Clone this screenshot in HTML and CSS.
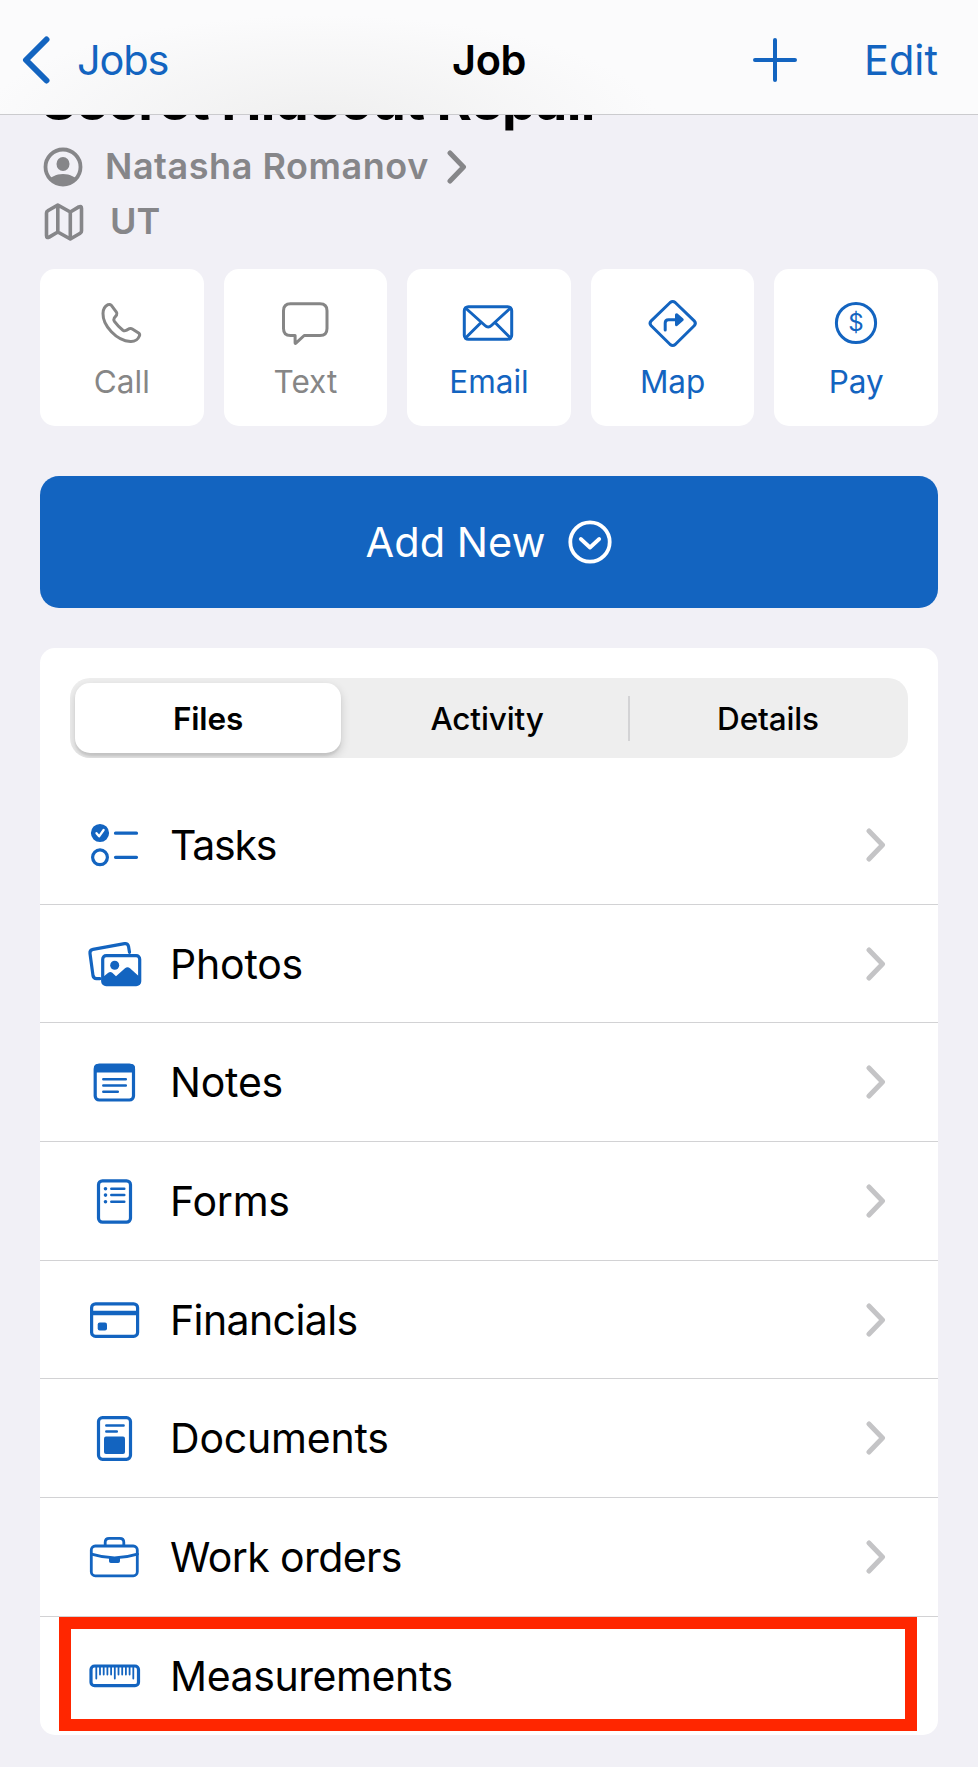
FILE: index.html
```html
<!DOCTYPE html>
<html lang="en">
  <head>
    <meta charset="utf-8">
    <meta name="viewport" content="width=device-width, initial-scale=1">
    <title>Job</title>
    <link rel="stylesheet" href="styles.css">
  </head>
  <body>
    <nav class="navbar">
      <a class="back">
        <svg width="28" height="48" viewBox="0 0 28 48"><path d="M24.500 3.500L4 24l20.500 20.500"/></svg>
        <span>Jobs</span>
      </a>
      <span class="nav-title">Job</span>
      <div class="nav-actions">
        <svg width="44" height="44" viewBox="0 0 44 44"><path d="M22 2v40M2 22h40"/></svg>
        <a class="edit">Edit</a>
      </div>
    </nav>

    <main>
      <header class="job">
        <h1>Secret Hideout Repair</h1>
        <div class="job-line">
          <svg class="job-icon" width="42" height="42" viewBox="0 0 42 42">
            <clipPath id="face"><circle cx="21" cy="21" r="18"/></clipPath>
            <circle cx="21" cy="21" r="17.500" fill="none" stroke="currentColor" stroke-width="3.800"/>
            <ellipse cx="21" cy="18" rx="6.500" ry="7"/>
            <path clip-path="url(#face)" d="M5 36c3-5 9-8 16-8s13 3 16 8v6H5z"/>
          </svg>
          <span class="customer">Natasha Romanov</span>
          <svg class="customer-arrow" width="20" height="34" viewBox="0 0 20 34"><path d="M3 3l13.500 14L3 31"/></svg>
        </div>
        <div class="job-line">
          <svg class="job-icon map-outline" width="42" height="42" viewBox="0 0 42 42">
            <path d="M4.500 12q0-1.500 1.300-2.200L15.800 4l12.500 7 8.500-5.100q2.700-1.300 2.700 1.600V30q0 1.500-1.300 2.200L28.300 38l-12.500-7-8.600 5.100q-2.700 1.300-2.700-1.600zM15.800 4v27M28.300 11v27"/>
          </svg>
          <span class="place">UT</span>
        </div>
      </header>

      <div class="actions">
        <button class="action disabled">
          <svg width="60" height="60" viewBox="0 0 60 60"><path d="M19.200 12.200l5.200 6.900q1 1.400.2 2.900l-2.400 3.200q-.9 1.500.2 3.200 3.600 5 8.500 8.800 1.600 1.100 3.300.1l3.200-1.600q1.500-.7 2.900.2l6.300 4.100q1.600 1.200.8 3c-1.500 3.600-4.600 5.700-9 5.500C24.500 47.800 10.700 32.500 11 20.500c0-4.200 1.800-7.200 5-8.800q2-.8 3.200.5z"/></svg>
          <span>Call</span>
        </button>
        <button class="action disabled">
          <svg width="60" height="60" viewBox="0 0 60 60"><path d="M15.500 10.700h29.500q7 0 7 7v17.800q0 7-7 7H29.200l-8.300 7.700q-.8.700-.8-.4v-7.300h-4.600q-7 0-7-7V17.700q0-7 7-7z"/></svg>
          <span>Text</span>
        </button>
        <button class="action">
          <svg width="60" height="60" viewBox="0 0 60 60"><rect x="5.300" y="13.700" width="47.400" height="32.600" rx="4"/><path d="M6.500 15l19.500 17.500q3.200 3.200 6.400 0L51.500 15M6.500 45l15.600-15.500M51.500 45L36 29.500"/></svg>
          <span>Email</span>
        </button>
        <button class="action">
          <svg width="60" height="60" viewBox="0 0 60 60"><path d="M27.200 9.500q2.500-2 5 0L51.200 27.800q2.300 2.500 0 5L32.200 51.500q-2.500 2-5 0L8.200 32.800q-2.300-2.500 0-5z"/><path d="M22.200 37v-7q0-3.300 3.300-3.300h8"/><path class="solid" d="M33.500 21.700l5.700 5-5.700 5z"/></svg>
          <span>Map</span>
        </button>
        <button class="action">
          <svg width="60" height="60" viewBox="0 0 60 60"><circle cx="30" cy="30" r="19.600"/><text x="30" y="38.200">$</text></svg>
          <span>Pay</span>
        </button>
      </div>

      <button class="add-new">
        <span>Add New</span>
        <svg width="44" height="44" viewBox="0 0 44 44"><circle cx="22" cy="22" r="19.700"/><path d="M12.800 19l9.200 8.500 9.200-8.500"/></svg>
      </button>

      <section class="panel">
        <div class="tabs">
          <button class="tab active">Files</button>
          <button class="tab activity">Activity</button>
          <button class="tab details">Details</button>
        </div>

        <ul class="list">
          <li>
            <svg class="icon" viewBox="0 0 56 56">
              <circle class="solid" cx="14" cy="16" r="7.500"/>
              <path class="check" d="M10.500 16.200l2.600 3.100 4.500-6.300"/>
              <circle cx="14" cy="40.300" r="7.400"/>
              <path d="M29.500 16.200h21M29.500 40.300h21"/>
            </svg>
            <span class="tasks">Tasks</span>
            <svg class="arrow" viewBox="0 0 20 34"><path d="M3 3l13.500 14L3 31"/></svg>
          </li>
          <li>
            <svg class="icon" viewBox="0 0 56 56">
              <path d="M14 42.600h-3.500q-3-.2-3.500-3L4 17.500q-.5-3.600 3-4.200l31.500-5.600q3.300-.4 4 2.600l1 6"/>
              <rect x="16.700" y="19.700" width="37" height="29" rx="3.500"/>
              <circle class="dot" cx="28.700" cy="29.200" r="4.500"/>
              <path class="fill" d="M17 41l5.300-4.200q2-1.500 4 0L30 40.200l9-8q2.500-1.800 5 0l9.700 8.800v7.500H17z"/>
            </svg>
            <span class="photos">Photos</span>
            <svg class="arrow" viewBox="0 0 20 34"><path d="M3 3l13.500 14L3 31"/></svg>
          </li>
          <li>
            <svg class="icon" viewBox="0 0 56 56">
              <rect x="9.200" y="11" width="38.300" height="35" rx="4"/>
              <path class="fill" d="M8 19.500V14q0-4 4-4h33q4 0 4 4v5.500q-1-1-3-1H11q-2 0-3 1z"/>
              <path class="thin" d="M17.300 25.200h22.500M17.300 31.400h22.500M17.300 37.800h14.500"/>
            </svg>
            <span class="notes">Notes</span>
            <svg class="arrow" viewBox="0 0 20 34"><path d="M3 3l13.500 14L3 31"/></svg>
          </li>
          <li>
            <svg class="icon" viewBox="0 0 56 56">
              <rect x="12.500" y="7.800" width="32" height="41.400" rx="4"/>
              <path class="thin" d="M25.300 15.700h13M25.300 22.100h13M25.300 28.700h13"/>
              <circle class="dot" cx="19.500" cy="15.700" r="1.800"/>
              <circle class="dot" cx="19.500" cy="22.100" r="1.800"/>
              <circle class="dot" cx="19.500" cy="28.700" r="1.800"/>
            </svg>
            <span class="forms">Forms</span>
            <svg class="arrow" viewBox="0 0 20 34"><path d="M3 3l13.500 14L3 31"/></svg>
          </li>
          <li>
            <svg class="icon" viewBox="0 0 56 56">
              <rect x="5.600" y="11.800" width="46" height="32.600" rx="4"/>
              <path class="fill" d="M5 18.700h47v4.500H5z"/>
              <rect class="fill" x="11.700" y="30.500" width="9.300" height="8" rx="2"/>
            </svg>
            <span class="financials">Financials</span>
            <svg class="arrow" viewBox="0 0 20 34"><path d="M3 3l13.500 14L3 31"/></svg>
          </li>
          <li>
            <svg class="icon" viewBox="0 0 56 56">
              <rect x="12.500" y="7.600" width="32" height="41.700" rx="4"/>
              <path class="thin" d="M20.300 15.600h17.300M20.300 21.600h10.500"/>
              <rect class="fill" x="18" y="26.500" width="21" height="17.500" rx="2"/>
            </svg>
            <span class="documents">Documents</span>
            <svg class="arrow" viewBox="0 0 20 34"><path d="M3 3l13.500 14L3 31"/></svg>
          </li>
          <li>
            <svg class="icon case" viewBox="0 0 56 56">
              <rect x="5.300" y="17" width="46" height="29.800" rx="4"/>
              <path d="M19.200 16.500v-3.200q0-4 4-4h10.600q4 0 4 4v3.200M5.500 25.200q23 7.200 46 0"/>
              <path class="fill" d="M23 28.500h11v3.700q0 1.800-1.800 1.800h-7.400q-1.800 0-1.800-1.800z"/>
            </svg>
            <span class="work">Work orders</span>
            <svg class="arrow" viewBox="0 0 20 34"><path d="M3 3l13.500 14L3 31"/></svg>
          </li>
          <li class="highlight">
            <svg class="icon" viewBox="0 0 56 56">
              <rect x="5" y="18" width="47.500" height="19.700" rx="3.500"/>
              <path class="tick" d="M10.300 19v11.500M14 19v7.500M17.700 19v7.500M21.400 19v7.500M25.100 19v7.500M28.800 19v11.500M32.500 19v7.500M36.200 19v7.500M39.900 19v7.500M43.600 19v7.500M47.300 19v11.500"/>
            </svg>
            <span class="measurements">Measurements</span>
          </li>
        </ul>
      </section>
    </main>
  </body>
</html>
```
FILE: styles.css
```css
* {
  box-sizing: border-box;
}

body {
  margin: 0;
  background: #f1f0f6;
  color: #000;
  font-family: Inter, "Liberation Sans", sans-serif;
  height: 1767px;
  overflow: hidden;
}

button {
  border: 0;
  padding: 0;
  font-family: inherit;
}

svg {
  flex: none;
  display: block;
}

/* top bar */

.navbar {
  position: fixed;
  top: 0;
  left: 0;
  right: 0;
  z-index: 1;
  height: 115px;
  padding: 5px 40px 0 22px;
  display: grid;
  grid-template-columns: 1fr auto 1fr;
  align-items: center;
  border-bottom: 1.500px solid #cbcbce;
  background:
    radial-gradient(ellipse 340px 110px at 320px 125px, #efefef 0%, rgba(239, 239, 239, 0) 100%),
    #fbfbfc;
  font-size: 41.500px;
  line-height: 50px;
  color: #1364c0;
}

.navbar svg {
  fill: none;
  stroke: currentColor;
  stroke-linecap: round;
  stroke-linejoin: round;
}

.back {
  display: flex;
  align-items: center;
  gap: 27px;
  letter-spacing: -1.200px;
}

.back svg {
  stroke-width: 6px;
}

.nav-title {
  color: #000;
  font-weight: 600;
  letter-spacing: -0.400px;
  padding-left: 18px;
}

.nav-actions {
  display: flex;
  justify-content: flex-end;
  align-items: center;
  gap: 67px;
}

.nav-actions svg {
  stroke-width: 4px;
}

/* job heading */

main {
  padding: 68px 40px 0;
}

.job {
  color: #868689;
}

h1 {
  margin: 0 0 5px 1px;
  font-size: 54px;
  line-height: 66px;
  font-weight: 700;
  letter-spacing: -0.650px;
  color: #000;
  white-space: nowrap;
}

.job-line {
  display: flex;
  align-items: center;
  height: 55px;
  font-size: 36px;
  font-weight: 600;
  line-height: 55px;
}

.job-icon {
  fill: currentColor;
  margin-left: 2px;
}

.map-outline {
  fill: none;
  stroke: currentColor;
  stroke-width: 3.600px;
  stroke-linejoin: round;
}

.customer {
  margin-left: 21px;
  letter-spacing: 0.550px;
}

.place {
  margin-left: 26px;
}

.customer-arrow {
  margin-left: 18px;
  fill: none;
  stroke: currentColor;
  stroke-width: 5px;
  stroke-linecap: round;
  stroke-linejoin: round;
}

/* quick actions */

.actions {
  display: grid;
  grid-template-columns: repeat(5, 1fr);
  gap: 20px;
  margin-top: 20px;
}

.action {
  height: 157px;
  padding-top: 24px;
  display: flex;
  flex-direction: column;
  align-items: center;
  background: #fff;
  border-radius: 15px;
  color: #1364c0;
  font-size: 31.500px;
  line-height: 40px;
}

.action.disabled {
  color: #868686;
}

.action span {
  margin-top: 9px;
}

.action svg {
  fill: none;
  stroke: currentColor;
  stroke-width: 3px;
  stroke-linejoin: round;
  stroke-linecap: round;
}

.action text {
  fill: currentColor;
  stroke: none;
  font-size: 24px;
  text-anchor: middle;
}

.action .solid {
  fill: currentColor;
}

.add-new {
  width: 100%;
  height: 132px;
  margin-top: 50px;
  display: flex;
  align-items: center;
  justify-content: center;
  gap: 23px;
  background: #1364c0;
  border-radius: 19px;
  color: #fff;
  font-size: 41.500px;
  font-weight: 400;
}

.add-new svg {
  fill: none;
  stroke: currentColor;
  stroke-width: 3.800px;
  stroke-linecap: round;
  stroke-linejoin: round;
}

/* file list */

.panel {
  margin-top: 40px;
  height: 1086.500px;
  padding-top: 30px;
  background: #fff;
  border-radius: 15px;
}

.tabs {
  display: grid;
  grid-template-columns: 266px 287px 1fr;
  height: 80px;
  margin: 0 30px;
  padding: 5px 0 5px 5px;
  background: #eee;
  border-radius: 20px;
  overflow: hidden;
}

.tab {
  background: none;
  font-size: 31.500px;
  font-weight: 500;
  letter-spacing: -0.150px;
  color: #000;
}

.tab.active {
  background: #fff;
  border-radius: 15px;
  box-shadow: 0 4px 10px rgba(0, 0, 0, 0.17), 0 3px 2px rgba(0, 0, 0, 0.06);
  font-weight: 600;
}

.tab.activity {
  padding-left: 5px;
}

.tab.details {
  background: linear-gradient(#d3d3d5, #d3d3d5) 0 50% / 2px 45px no-repeat;
}

.list {
  list-style: none;
  margin: 28px 0 0;
  padding: 0;
}

.list li {
  height: 118.700px;
  padding: 0 52px 0 46px;
  display: flex;
  align-items: center;
  border-bottom: 1.500px solid #d2d2d4;
  font-size: 41px;
  line-height: 50px;
  letter-spacing: -0.200px;
}

.list span {
  margin-left: 28px;
}

.list .tasks {
  letter-spacing: -1.200px;
}

.list .financials,
.list .work {
  letter-spacing: -0.600px;
}

.list .measurements {
  letter-spacing: -0.400px;
}

.icon {
  width: 56px;
  height: 56px;
  fill: none;
  stroke: #1364c0;
  stroke-width: 3.200px;
  stroke-linecap: round;
  stroke-linejoin: round;
}

.icon .solid,
.icon .fill,
.icon .dot {
  fill: #1364c0;
}

.icon .fill,
.icon .dot {
  stroke: none;
}

.icon .check {
  stroke: #fff;
  stroke-width: 2.300px;
}

.icon .thin {
  stroke-width: 2.500px;
}

.icon .tick {
  stroke-width: 1.800px;
}

.icon.case {
  stroke-width: 2.800px;
}

.arrow {
  width: 20px;
  height: 34px;
  margin-left: auto;
  fill: none;
  stroke: #c4c4c6;
  stroke-width: 5px;
  stroke-linecap: round;
  stroke-linejoin: round;
}

.list .highlight {
  height: 114.500px;
  margin: 0 21px 0 19px;
  padding: 3px 0 0 15px;
  border: 12px solid #ff2600;
}
```
